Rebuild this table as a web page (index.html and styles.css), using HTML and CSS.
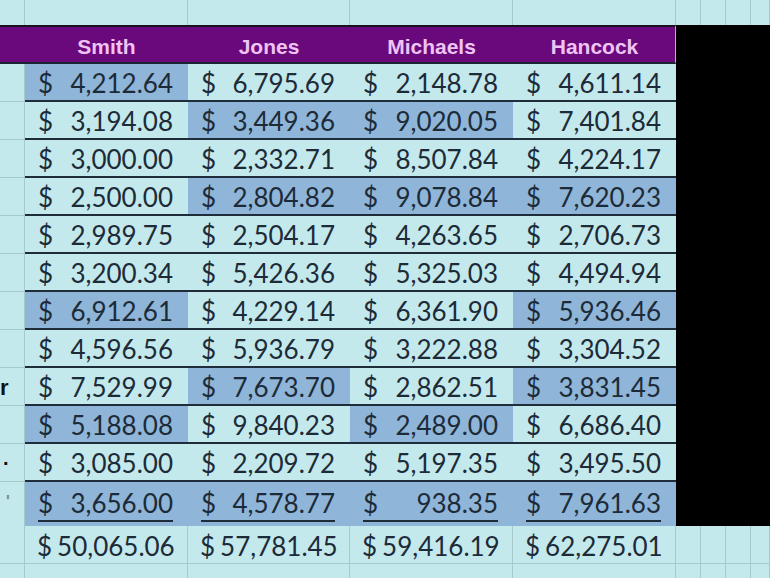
FILE: index.html
```html
<!DOCTYPE html>
<html>
<head>
<meta charset="utf-8">
<link rel="stylesheet" href="styles.css">
</head>
<body>
<div class="sheet">
  <div class="gridrow top">
    <div class="g"></div><div class="g"></div><div class="g"></div><div class="g"></div><div class="g"></div><div class="g"></div><div class="g"></div><div class="g"></div><div class="g"></div>
  </div>
  <div class="mid">
    <div class="table">
      <div class="head">
        <div></div><div>Smith</div><div>Jones</div><div>Michaels</div><div>Hancock</div>
      </div>
      <div class="row"><div class="lab"></div><div class="v b"><span class="amt"><span>$</span><span>4,212.64</span></span></div><div class="v"><span class="amt"><span>$</span><span>6,795.69</span></span></div><div class="v"><span class="amt"><span>$</span><span>2,148.78</span></span></div><div class="v"><span class="amt"><span>$</span><span>4,611.14</span></span></div></div>
      <div class="row"><div class="lab"></div><div class="v"><span class="amt"><span>$</span><span>3,194.08</span></span></div><div class="v b"><span class="amt"><span>$</span><span>3,449.36</span></span></div><div class="v b"><span class="amt"><span>$</span><span>9,020.05</span></span></div><div class="v"><span class="amt"><span>$</span><span>7,401.84</span></span></div></div>
      <div class="row"><div class="lab"></div><div class="v"><span class="amt"><span>$</span><span>3,000.00</span></span></div><div class="v"><span class="amt"><span>$</span><span>2,332.71</span></span></div><div class="v"><span class="amt"><span>$</span><span>8,507.84</span></span></div><div class="v"><span class="amt"><span>$</span><span>4,224.17</span></span></div></div>
      <div class="row"><div class="lab"></div><div class="v"><span class="amt"><span>$</span><span>2,500.00</span></span></div><div class="v b"><span class="amt"><span>$</span><span>2,804.82</span></span></div><div class="v b"><span class="amt"><span>$</span><span>9,078.84</span></span></div><div class="v b"><span class="amt"><span>$</span><span>7,620.23</span></span></div></div>
      <div class="row"><div class="lab"></div><div class="v"><span class="amt"><span>$</span><span>2,989.75</span></span></div><div class="v"><span class="amt"><span>$</span><span>2,504.17</span></span></div><div class="v"><span class="amt"><span>$</span><span>4,263.65</span></span></div><div class="v"><span class="amt"><span>$</span><span>2,706.73</span></span></div></div>
      <div class="row"><div class="lab"></div><div class="v"><span class="amt"><span>$</span><span>3,200.34</span></span></div><div class="v"><span class="amt"><span>$</span><span>5,426.36</span></span></div><div class="v"><span class="amt"><span>$</span><span>5,325.03</span></span></div><div class="v"><span class="amt"><span>$</span><span>4,494.94</span></span></div></div>
      <div class="row"><div class="lab"></div><div class="v b"><span class="amt"><span>$</span><span>6,912.61</span></span></div><div class="v"><span class="amt"><span>$</span><span>4,229.14</span></span></div><div class="v"><span class="amt"><span>$</span><span>6,361.90</span></span></div><div class="v b"><span class="amt"><span>$</span><span>5,936.46</span></span></div></div>
      <div class="row"><div class="lab"></div><div class="v"><span class="amt"><span>$</span><span>4,596.56</span></span></div><div class="v"><span class="amt"><span>$</span><span>5,936.79</span></span></div><div class="v"><span class="amt"><span>$</span><span>3,222.88</span></span></div><div class="v"><span class="amt"><span>$</span><span>3,304.52</span></span></div></div>
      <div class="row"><div class="lab">r</div><div class="v"><span class="amt"><span>$</span><span>7,529.99</span></span></div><div class="v b"><span class="amt"><span>$</span><span>7,673.70</span></span></div><div class="v"><span class="amt"><span>$</span><span>2,862.51</span></span></div><div class="v b"><span class="amt"><span>$</span><span>3,831.45</span></span></div></div>
      <div class="row"><div class="lab"></div><div class="v b"><span class="amt"><span>$</span><span>5,188.08</span></span></div><div class="v"><span class="amt"><span>$</span><span>9,840.23</span></span></div><div class="v b"><span class="amt"><span>$</span><span>2,489.00</span></span></div><div class="v"><span class="amt"><span>$</span><span>6,686.40</span></span></div></div>
      <div class="row"><div class="lab dot">.</div><div class="v"><span class="amt"><span>$</span><span>3,085.00</span></span></div><div class="v"><span class="amt"><span>$</span><span>2,209.72</span></span></div><div class="v"><span class="amt"><span>$</span><span>5,197.35</span></span></div><div class="v"><span class="amt"><span>$</span><span>3,495.50</span></span></div></div>
      <div class="row last"><div class="lab faint">'</div><div class="v b"><span class="amt"><span>$</span><span>3,656.00</span></span></div><div class="v b"><span class="amt"><span>$</span><span>4,578.77</span></span></div><div class="v b"><span class="amt"><span>$</span><span>938.35</span></span></div><div class="v b"><span class="amt"><span>$</span><span>7,961.63</span></span></div></div>
    </div>
    <div class="blackbox"></div>
  </div>
  <div class="gridrow total">
    <div class="g"></div>
    <div class="g t"><span class="amt"><span>$</span><span>50,065.06</span></span></div>
    <div class="g t"><span class="amt"><span>$</span><span>57,781.45</span></span></div>
    <div class="g t"><span class="amt"><span>$</span><span>59,416.19</span></span></div>
    <div class="g t"><span class="amt"><span>$</span><span>62,275.01</span></span></div>
    <div class="g"></div><div class="g"></div><div class="g"></div><div class="g"></div>
  </div>
  <div class="gridrow filler">
    <div class="g"></div><div class="g"></div><div class="g"></div><div class="g"></div><div class="g"></div><div class="g"></div><div class="g"></div><div class="g"></div><div class="g"></div>
  </div>
</div>
</body>
</html>
```
FILE: styles.css
```css
* { box-sizing: border-box; }
html, body { margin: 0; padding: 0; }
body {
  width: 770px;
  height: 578px;
  overflow: hidden;
  background: #c4e9ed;
  font-family: Lato, "Open Sans", sans-serif;
  color: #1d2b38;
}
.sheet { width: 770px; }
.gridrow {
  display: grid;
  grid-template-columns: 25px 163px 162px 163px 163px 25px 25px 25px 19px;
}
.g { border-right: 1px solid #a6c9ce; }
.top { height: 25px; }
.mid { display: flex; }
.table { width: 676px; }
.blackbox { flex: 1; background: #000; }
.head {
  display: grid;
  grid-template-columns: 25px 163px 162px 163px 163px;
  height: 39px;
  background: #6a097c;
  border-top: 2px solid #1b0f22;
  border-bottom: 2px solid #1b2330;
  border-right: 1px solid #c8a3d2;
  color: #efc4f5;
  font: bold 21px "Liberation Sans", Arial, sans-serif;
  align-items: center;
  text-align: center;
  padding-top: 4px;
}
.row {
  display: grid;
  grid-template-columns: 25px 163px 162px 163px 163px;
  height: 38px;
}
.lab {
  border-right: 1px solid #a6c9ce;
  border-bottom: 1px solid #a6c9ce;
  font: bold 22px "Liberation Sans", Arial, sans-serif;
  color: #111;
  display: flex;
  align-items: center;
  padding-left: 0;
  padding-top: 2px;
  overflow: hidden;
}
.lab.dot { font-size: 20px; padding-left: 3px; padding-bottom: 10px; }
.lab.faint { color: #7a8c90; font-size: 16px; padding-left: 6px; padding-bottom: 6px; }
.v {
  border-bottom: 2px solid #1f2d3b;
  display: flex;
  align-items: center;
  padding: 2px 15px 0 13px;
  font-size: 26px;
}
.b { background: #8fb6d8; }
.amt {
  display: flex;
  justify-content: space-between;
  width: 100%;
  line-height: 30px;
}
.last { height: 44px; }
.last .v { border-bottom: none; padding-top: 0; }
.last .v .amt { border-bottom: 2px solid #1f2d3b; padding-bottom: 2px; margin-top: 2px; }
.last .lab { border-bottom: none; }
.total { height: 38px; }
.total .g { border-bottom: 1px solid #a6c9ce; }
.t {
  display: flex;
  align-items: center;
  padding: 2px 14px 0 12px;
  font-size: 26px;
}
.t .amt { column-gap: 5px; }
.filler { height: 17px; }
```
